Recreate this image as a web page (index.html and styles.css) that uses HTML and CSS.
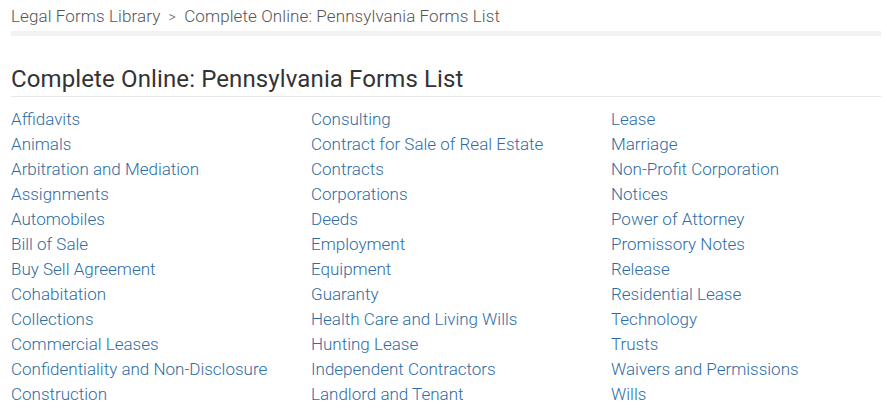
FILE: index.html
```html
<!DOCTYPE html>
<html lang="en">
<head>
  <meta charset="UTF-8">
  <meta name="viewport" content="width=device-width, initial-scale=1.0">
  <link rel="stylesheet" href="styles.css">
</head>
<body>
  <div class="page">
    <div class="breadcrumb">
      <a href="#">Legal Forms Library</a>
      <span class="sep">&gt;</span>
      <span>Complete Online: Pennsylvania Forms List</span>
    </div>

    <h1 class="title">Complete Online: Pennsylvania Forms List</h1>

    <div class="forms-list">
      <ul class="column">
        <li><a href="#">Affidavits</a></li>
        <li><a href="#">Animals</a></li>
        <li><a href="#">Arbitration and Mediation</a></li>
        <li><a href="#">Assignments</a></li>
        <li><a href="#">Automobiles</a></li>
        <li><a href="#">Bill of Sale</a></li>
        <li><a href="#">Buy Sell Agreement</a></li>
        <li><a href="#">Cohabitation</a></li>
        <li><a href="#">Collections</a></li>
        <li><a href="#">Commercial Leases</a></li>
        <li><a href="#">Confidentiality and Non-Disclosure</a></li>
        <li><a href="#">Construction</a></li>
      </ul>
      <ul class="column">
        <li><a href="#">Consulting</a></li>
        <li><a href="#">Contract for Sale of Real Estate</a></li>
        <li><a href="#">Contracts</a></li>
        <li><a href="#">Corporations</a></li>
        <li><a href="#">Deeds</a></li>
        <li><a href="#">Employment</a></li>
        <li><a href="#">Equipment</a></li>
        <li><a href="#">Guaranty</a></li>
        <li><a href="#">Health Care and Living Wills</a></li>
        <li><a href="#">Hunting Lease</a></li>
        <li><a href="#">Independent Contractors</a></li>
        <li><a href="#">Landlord and Tenant</a></li>
      </ul>
      <ul class="column">
        <li><a href="#">Lease</a></li>
        <li><a href="#">Marriage</a></li>
        <li><a href="#">Non-Profit Corporation</a></li>
        <li><a href="#">Notices</a></li>
        <li><a href="#">Power of Attorney</a></li>
        <li><a href="#">Promissory Notes</a></li>
        <li><a href="#">Release</a></li>
        <li><a href="#">Residential Lease</a></li>
        <li><a href="#">Technology</a></li>
        <li><a href="#">Trusts</a></li>
        <li><a href="#">Waivers and Permissions</a></li>
        <li><a href="#">Wills</a></li>
      </ul>
    </div>
  </div>
</body>
</html>
```

FILE: styles.css
```css
body {
  font-family: Roboto, 'Liberation Sans', Arial, sans-serif;
  background-color: #fff;
  margin: 0;
  padding: 0;
}
.page {
  padding: 0 6px 0 11px;
}
.breadcrumb {
  font-size: 17px;
  font-weight: 300;
  line-height: 20px;
  letter-spacing: 0.1px;
  color: #555;
  padding-top: 6px;
  padding-bottom: 4px;
  border-bottom: 5px solid #f2f2f2;
}
.breadcrumb a {
  color: #555;
  text-decoration: none;
}
.breadcrumb .sep {
  margin: 0 4px;
  font-size: 14px;
  color: #666;
}
.title {
  font-size: 24px;
  font-weight: 400;
  letter-spacing: 0.12px;
  color: #333;
  margin: 30px 0 0;
  padding-bottom: 4px;
  line-height: 26px;
  border-bottom: 1px solid #e8e8e8;
}
.forms-list {
  display: grid;
  grid-template-columns: 300px 300px 300px;
  margin-top: 10px;
}
.column {
  list-style: none;
  margin: 0;
  padding: 0;
}
.column li {
  font-size: 17px;
  line-height: 25px;
  font-weight: 300;
}
.column a {
  color: #2e6da4;
  text-decoration: none;
}
```
